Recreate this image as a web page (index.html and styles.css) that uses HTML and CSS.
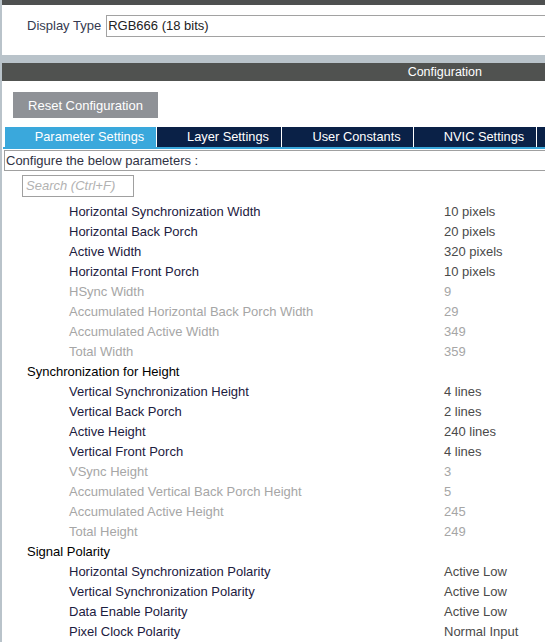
FILE: index.html
```html
<!DOCTYPE html>
<html>
<head>
<meta charset="utf-8">
<link rel="stylesheet" href="styles.css">
</head>
<body>
<div class="page">
  <section class="mode">
    <div class="mode-bar"><span>Mode</span></div>
    <div class="mode-body">
      <span class="field-label">Display Type</span>
      <div class="select">RGB666 (18 bits)</div>
    </div>
  </section>
  <section class="config">
    <div class="config-bar"><span>Configuration</span></div>
    <div class="config-body">
      <button class="reset">Reset Configuration</button>
      <div class="tabs">
        <div class="tab active t1">Parameter Settings</div>
        <div class="tab t2">Layer Settings</div>
        <div class="tab t3">User Constants</div>
        <div class="tab t4">NVIC Settings</div>
        <div class="tab t5"></div>
      </div>
      <div class="hint">Configure the below parameters :</div>
      <div class="search">Search (Ctrl+F)</div>
      <div class="params">
        <div class="row"><span>Horizontal Synchronization Width</span><span class="val">10 pixels</span></div>
        <div class="row"><span>Horizontal Back Porch</span><span class="val">20 pixels</span></div>
        <div class="row"><span>Active Width</span><span class="val">320 pixels</span></div>
        <div class="row"><span>Horizontal Front Porch</span><span class="val">10 pixels</span></div>
        <div class="row dis"><span>HSync Width</span><span class="val">9</span></div>
        <div class="row dis"><span>Accumulated Horizontal Back Porch Width</span><span class="val">29</span></div>
        <div class="row dis"><span>Accumulated Active Width</span><span class="val">349</span></div>
        <div class="row dis"><span>Total Width</span><span class="val">359</span></div>
        <div class="group">Synchronization for Height</div>
        <div class="row"><span>Vertical Synchronization Height</span><span class="val">4 lines</span></div>
        <div class="row"><span>Vertical Back Porch</span><span class="val">2 lines</span></div>
        <div class="row"><span>Active Height</span><span class="val">240 lines</span></div>
        <div class="row"><span>Vertical Front Porch</span><span class="val">4 lines</span></div>
        <div class="row dis"><span>VSync Height</span><span class="val">3</span></div>
        <div class="row dis"><span>Accumulated Vertical Back Porch Height</span><span class="val">5</span></div>
        <div class="row dis"><span>Accumulated Active Height</span><span class="val">245</span></div>
        <div class="row dis"><span>Total Height</span><span class="val">249</span></div>
        <div class="group">Signal Polarity</div>
        <div class="row"><span>Horizontal Synchronization Polarity</span><span class="val">Active Low</span></div>
        <div class="row"><span>Vertical Synchronization Polarity</span><span class="val">Active Low</span></div>
        <div class="row"><span>Data Enable Polarity</span><span class="val">Active Low</span></div>
        <div class="row"><span>Pixel Clock Polarity</span><span class="val">Normal Input</span></div>
      </div>
    </div>
  </section>
</div>
</body>
</html>
```

FILE: styles.css
```css
html, body {
  margin: 0;
  padding: 0;
  background: #b9c3ca;
  overflow: hidden;
  height: 642px;
}
body {
  font-family: "Liberation Sans", Arial, sans-serif;
  font-size: 13px;
}
.page {
  padding-left: 2px;
}
.mode {
  background: #ffffff;
}
.mode-bar {
  height: 5px;
  background: #4e5050;
  overflow: hidden;
  display: flex;
  justify-content: flex-end;
  padding-right: 85px;
}
.mode-bar span {
  color: #ffffff;
  font-size: 12.5px;
  line-height: 14px;
  margin-top: -11px;
}
.mode-body {
  height: 50px;
  box-sizing: border-box;
  padding-top: 10px;
  padding-left: 25px;
  display: flex;
  align-items: flex-start;
  gap: 5px;
}
.field-label {
  color: #353a50;
  line-height: 22px;
}
.select {
  flex: 1;
  height: 22px;
  box-sizing: border-box;
  border: 1px solid #a2a2a2;
  border-right: none;
  line-height: 20px;
  padding-left: 1px;
  color: #222222;
}
.config {
  margin-top: 8px;
  background: #ffffff;
  height: 600px;
}
.config-bar {
  height: 18px;
  background: #505250;
  display: flex;
  justify-content: flex-end;
  padding-right: 63px;
}
.config-bar span {
  color: #ffffff;
  font-size: 12.5px;
  line-height: 18px;
}
.config-body {
  padding-top: 11px;
}
.reset {
  display: block;
  margin: 0 0 0 11px;
  width: 145px;
  height: 26px;
  border: none;
  background: #8f9297;
  color: #ffffff;
  font-family: "Liberation Sans", Arial, sans-serif;
  font-size: 13px;
  padding: 0;
}
.tabs {
  margin-top: 9px;
  margin-left: 1px;
  padding-left: 2px;
  display: flex;
  height: 20px;
  border-bottom: 2px solid #3aa8dc;
}
.tab {
  background: #0a2147;
  color: #ffffff;
  line-height: 20px;
  text-align: center;
  padding-left: 18px;
  box-sizing: border-box;
  border-right: 1px solid #ffffff;
  flex: none;
  white-space: nowrap;
  font-size: 12.8px;
}
.tab.active {
  background: #3aa8dc;
}
.t1 { width: 152px; }
.t2 { width: 125px; }
.t3 { width: 132px; }
.t4 { width: 123px; }
.t5 { flex: 1; border-right: none; }
.hint {
  margin-top: 1px;
  margin-left: 2px;
  height: 21px;
  box-sizing: border-box;
  border: 1px solid #a0a0a0;
  border-right: none;
  line-height: 19px;
  padding-left: 1px;
  color: #303244;
}
.search {
  margin-top: 4px;
  margin-left: 20px;
  width: 112px;
  height: 22px;
  box-sizing: border-box;
  border: 1px solid #a0a0a0;
  line-height: 20px;
  padding-left: 3px;
  color: #b2b2b2;
  font-style: italic;
}
.params {
  margin-top: 5px;
}
.row {
  display: grid;
  grid-template-columns: 375px auto;
  padding-left: 67px;
  height: 20px;
  line-height: 20px;
  color: #1c2040;
}
.row .val {
  color: #4a4a4a;
}
.row.dis, .row.dis .val {
  color: #a6a6a6;
}
.group {
  padding-left: 25px;
  height: 20px;
  line-height: 20px;
  color: #000000;
}
```
